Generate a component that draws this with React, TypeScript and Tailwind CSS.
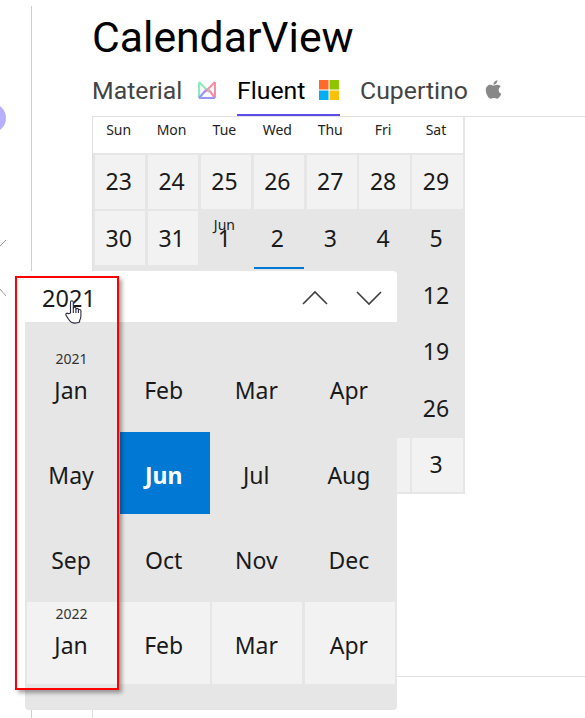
import { FaApple } from "react-icons/fa";

const weekdays = ["Sun", "Mon", "Tue", "Wed", "Thu", "Fri", "Sat"];
const days: { d: number; inMonth: boolean; label?: string; today?: boolean }[] = [
  ...[23, 24, 25, 26, 27, 28, 29, 30, 31].map((d) => ({ d, inMonth: false })),
  ...Array.from({ length: 30 }, (_, i) => ({
    d: i + 1,
    inMonth: true,
    label: i === 0 ? "Jun" : undefined,
    today: i === 1,
  })),
  ...[1, 2, 3].map((d) => ({ d, inMonth: false })),
];
const months: { m: string; year?: string; selected?: boolean; out?: boolean }[] = [
  { m: "Jan", year: "2021" },
  { m: "Feb" },
  { m: "Mar" },
  { m: "Apr" },
  { m: "May" },
  { m: "Jun", selected: true },
  { m: "Jul" },
  { m: "Aug" },
  { m: "Sep" },
  { m: "Oct" },
  { m: "Nov" },
  { m: "Dec" },
  { m: "Jan", year: "2022", out: true },
  { m: "Feb", out: true },
  { m: "Mar", out: true },
  { m: "Apr", out: true },
];

function MaterialLogo() {
  return (
    <svg width="18" height="18" viewBox="0 0 18 18" fill="none" strokeWidth="2.2">
      <path d="M1 1V17" stroke="#8eecbc" />
      <path d="M1 1L11 11" stroke="#8eecbc" />
      <path d="M17 1V17" stroke="#f78fa8" />
      <path d="M17 1L7 11" stroke="#f78fa8" />
      <path d="M17 17L11 9" stroke="#f78fa8" />
      <path d="M1 17H17" stroke="#9a95f7" />
      <path d="M1 17L8 9" stroke="#9a95f7" />
    </svg>
  );
}

function WindowsLogo() {
  return (
    <svg width="20" height="20" viewBox="0 0 20 20">
      <rect width="9.5" height="9.5" fill="#ff6a2b" />
      <rect x="10.5" width="9.5" height="9.5" fill="#8fc400" />
      <rect y="10.5" width="9.5" height="9.5" fill="#03aef4" />
      <rect x="10.5" y="10.5" width="9.5" height="9.5" fill="#ffc107" />
    </svg>
  );
}

function HandCursor() {
  return (
    <svg width="20" height="26" viewBox="0 0 20 26" fill="#fff" stroke="#2b2b40" strokeWidth="1.1" strokeLinejoin="round">
      <path d="M6.5 14V3.2c0-2 2.8-2 2.8 0V9.5c0-1.6 2.6-1.6 2.6 0v1c0-1.5 2.5-1.5 2.5 0v1c0-1.4 2.5-1.4 2.5 0v5.5c0 2.2-.6 3.2-1.3 4.6v1.4c-2.8 1.3-6 1.3-8.2.3-1.7-1.1-4.3-5.1-5.4-7-.9-1.6 1-2.8 2.3-1.6z" />
      <path d="M9.3 9.5V14M11.9 10.5V14M14.4 11.5V14" fill="none" />
    </svg>
  );
}

export default function App() {
  return (
    <div className="relative h-[718px] w-[585px] overflow-hidden bg-white font-['Noto_Sans',sans-serif] text-[#1a1a1a]">
      <div className="flex h-full">
        {/* left rail */}
        <div className="relative mt-[6px] w-[32px] shrink-0 border-r border-[#cfcfcf]">
          <div className="absolute left-[-24px] top-[97px] h-[30px] w-[30px] rounded-full bg-[#b8aeff]" />
          <svg className="absolute left-0 top-[232px]" width="7" height="60" viewBox="0 0 7 60" fill="none" stroke="#9a9a9a" strokeWidth="1">
            <path d="M0 8L6 2" />
            <path d="M0 51L6 58" />
          </svg>
        </div>

        {/* main */}
        <div className="ml-[60px] min-w-0 flex-1">
          <h1 className="mt-[12px] h-[50px] font-['Roboto',sans-serif] text-[42.7px] leading-[50px] text-black">CalendarView</h1>

          <div className="mt-[12px] flex h-[42px] font-['Roboto',sans-serif] text-[24.8px] leading-[34px]">
            <div className="flex h-[42px] w-[145px] text-[#444]">
              <span>Material</span>
              <span className="ml-[16px] mt-[7px]"><MaterialLogo /></span>
            </div>
            <div className="flex h-[42px] w-[103px] border-b-2 border-[#5b4de8] text-black">
              <span>Fluent</span>
              <span className="ml-[14px] mt-[6px]"><WindowsLogo /></span>
            </div>
            <div className="ml-[20px] flex text-[#444]">
              <span>Cupertino</span>
              <span className="ml-[15px] mt-[5px] text-[#888]"><FaApple size={21} /></span>
            </div>
          </div>

          {/* tab panel */}
          <div className="h-[602px] border-l border-[#e0e0e0]">
            <div className="h-[561px] border-b border-t border-[#e0e0e0]">
              <div className="h-[377px] w-[372px] border-b-2 border-r-2 border-[#e6e6e6]">
                <div className="grid h-[36px] w-[370px] grid-cols-[repeat(7,50.3px)] gap-x-[2.6px] pl-[2px] pt-[4px] text-center text-[14px] leading-[18px] text-[#222]">
                  {weekdays.map((w) => (
                    <span key={w} className="pr-[3px]">{w}</span>
                  ))}
                </div>
                <div className="grid w-[370px] grid-cols-[repeat(7,50.3px)] grid-rows-[repeat(6,54px)] gap-x-[2.6px] gap-y-[2.6px] bg-[#e6e6e6] pb-[1px] pl-[2px] pt-[1.7px]">
                  {days.map((c, i) => (
                    <div
                      key={i}
                      className={`relative flex items-center justify-center pr-[3px] text-[23px] ${c.inMonth ? "" : "bg-[#f2f2f2]"}`}
                    >
                      {c.label && <span className="absolute left-0 right-[3px] top-[5px] text-center text-[14px] leading-[18px]">{c.label}</span>}
                      {/* cells from the third row on are covered by the flyout, except the last column */}
                      {i < 14 || i % 7 === 6 ? c.d : null}
                      {c.today && <div className="absolute bottom-[-4px] left-0 right-0 h-[2px] bg-[#0078d4]" />}
                    </div>
                  ))}
                </div>
              </div>
            </div>
          </div>
        </div>
      </div>

      {/* month picker flyout */}
      <div className="absolute left-[25px] top-[270.7px] h-[439.3px] w-[372px] overflow-hidden rounded-[4px] bg-[#e6e6e6]">
        <div className="flex h-[51px] items-center justify-between bg-white pl-[17px] pr-[15px] pt-[3px]">
          <span className="text-[23.5px] leading-[48px]">2021</span>
          <div className="flex gap-[28px]">
            <svg width="26" height="16" viewBox="0 0 26 16" fill="none" stroke="#404040" strokeWidth="1.6">
              <path d="M1 14L13 2L25 14" />
            </svg>
            <svg width="26" height="16" viewBox="0 0 26 16" fill="none" stroke="#404040" strokeWidth="1.6">
              <path d="M1 2L13 14L25 2" />
            </svg>
          </div>
        </div>
        <div className="grid grid-cols-4 grid-rows-[repeat(4,82px)] gap-x-[2.5px] gap-y-[3px] px-[2px] pt-[25px]">
          {months.map((c, i) => (
            <div
              key={i}
              className={`relative flex items-center justify-center pr-[2px] pt-[5px] text-[23px] ${
                c.selected ? "bg-[#0078d4] font-bold text-white" : c.out ? "bg-[#f2f2f2]" : ""
              }`}
            >
              {c.year && <span className="absolute left-0 right-[1px] top-[3px] text-center text-[14px] leading-[18px] text-[#333]">{c.year}</span>}
              {c.m}
            </div>
          ))}
        </div>
      </div>

      {/* annotation and pointer */}
      <div className="absolute left-[15px] top-[276px] h-[414px] w-[104px] border-2 border-[#ff0000] shadow-[3px_3px_4px_rgba(0,0,0,0.35)]" />
      <div className="absolute left-[64px] top-[299px]">
        <HandCursor />
      </div>
    </div>
  );
}
